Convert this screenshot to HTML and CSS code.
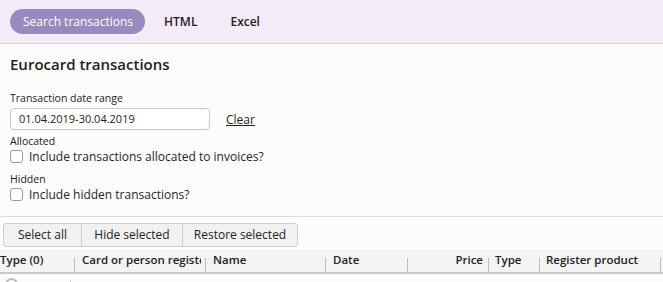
FILE: index.html
```html
<!DOCTYPE html>
<html>
<head>
<meta charset="utf-8">
<link rel="stylesheet" href="styles.css">
</head>
<body>
<div class="topbar">
  <span class="tab active">Search transactions</span>
  <span class="tab">HTML</span>
  <span class="tab">Excel</span>
</div>
<div class="content">
  <h1 class="title">Eurocard transactions</h1>
  <div class="field f1">
    <div class="label">Transaction date range</div>
    <div class="daterow">
      <div class="input">01.04.2019-30.04.2019</div>
      <a class="clear">Clear</a>
    </div>
  </div>
  <div class="field f2">
    <div class="label">Allocated</div>
    <label class="check"><span class="box"></span>Include transactions allocated to invoices?</label>
  </div>
  <div class="field f3">
    <div class="label">Hidden</div>
    <label class="check"><span class="box"></span>Include hidden transactions?</label>
  </div>
</div>
<div class="actions">
  <div class="btngroup">
    <span class="btn b1">Select all</span>
    <span class="btn b2">Hide selected</span>
    <span class="btn b3">Restore selected</span>
  </div>
</div>
<div class="thead">
  <div class="th c1"><span class="tx">Type (0)</span></div>
  <div class="th c2"><span class="tx">Card or person registered</span></div>
  <div class="th c3"><span class="tx">Name</span></div>
  <div class="th c4"><span class="tx">Date</span></div>
  <div class="th c5"><span class="tx">Price</span></div>
  <div class="th c6"><span class="tx">Type</span></div>
  <div class="th c7"><span class="tx">Register product</span></div>
</div>
<div class="tbody"><span class="spin"></span><span class="dot"></span></div>
</body>
</html>
```
FILE: styles.css
```css
* { box-sizing: border-box; }
html, body { margin: 0; padding: 0; }
body {
  width: 663px; height: 282px; overflow: hidden;
  background: #fcfcfc;
  font-family: "Open Sans", "Noto Sans", sans-serif;
  color: #222;
}
.topbar {
  height: 44px;
  background: #f3ecf8;
  border-bottom: 1px solid #d9d6dc;
  display: flex; align-items: center;
  padding: 0 0 1px 10px;
}
.tab {
  font-size: 12px; font-weight: 600; color: #1c1c1c;
  margin-right: 33px;
}
.tab.active {
  background: #9a89bf; color: #fff;
  height: 25px; line-height: 25px;
  padding: 0 12px 0 13px; border-radius: 13px;
  margin-right: 19px; font-weight: 500;
}
.content { padding: 9px 10px 0 10px; height: 173px; border-bottom: 1px solid #dedede; }
.title { font-size: 15px; font-weight: 600; margin: 0 0 16px 0; line-height: 22px; color: #222; }
.label { font-size: 10.5px; line-height: 14px; color: #222; }
.daterow { display: flex; align-items: center; margin-top: 3px; }
.f1 { margin-bottom: 4px; }
.f2 { margin-bottom: 7px; }
.input {
  width: 200px; height: 22px; border: 1px solid #c8c8c8; border-radius: 4px;
  background: #fff; font-size: 11px; line-height: 20px; padding-left: 8px; color: #222;
}
.clear { margin-left: 16px; font-size: 12px; text-decoration: underline; color: #222; }
.check { display: flex; align-items: center; font-size: 12px; height: 17px; color: #2a2228; }
.box {
  width: 13px; height: 13px; border: 1px solid #9a9a9a; border-radius: 3px;
  background: #fff; margin-right: 6px;
}
.actions { padding: 5px 0 0 3px; height: 33px; }
.btngroup {
  display: inline-flex; height: 24px; border: 1px solid #cfcfcf; border-radius: 3px;
  background: #f1f1f1;
}
.btn { font-size: 12px; line-height: 22px; text-align: center; color: #222; border-left: 1px solid #cfcfcf; }
.btn.b1 { width: 77px; border-left: none; }
.btn.b2 { width: 101px; }
.btn.b3 { width: 115px; }
.thead {
  display: flex; height: 24px; background: #f4f4f4;
  border-bottom: 2px solid #c9c9c9;
}
.th {
  font-size: 11.5px; font-weight: 600; line-height: 20px; white-space: nowrap;
  padding-left: 7px; padding-right: 5px; position: relative; color: #222; flex: none;
}
.tx { display: block; overflow: hidden; }
.th::after {
  content: ""; position: absolute; right: 0; top: 8px; height: 14px; width: 1px; background: #bdbdbd;
}
.c1 { width: 75px; padding-left: 0; }
.c2 { width: 131px; }
.c3 { width: 120px; }
.c4 { width: 82px; }
.c5 { width: 81px; text-align: right; padding-right: 6px; }
.c6 { width: 51px; padding-left: 6px; }
.c7 { width: 121px; padding-left: 6px; }
.tbody { position: relative; height: 8px; }
.spin {
  position: absolute; left: 5px; top: 4px; width: 13px; height: 13px;
  border: 2px solid #bdbdbd; border-radius: 50%;
}
.dot { position: absolute; left: 70px; top: 6px; width: 1px; height: 2px; background: #ccc; }
```
